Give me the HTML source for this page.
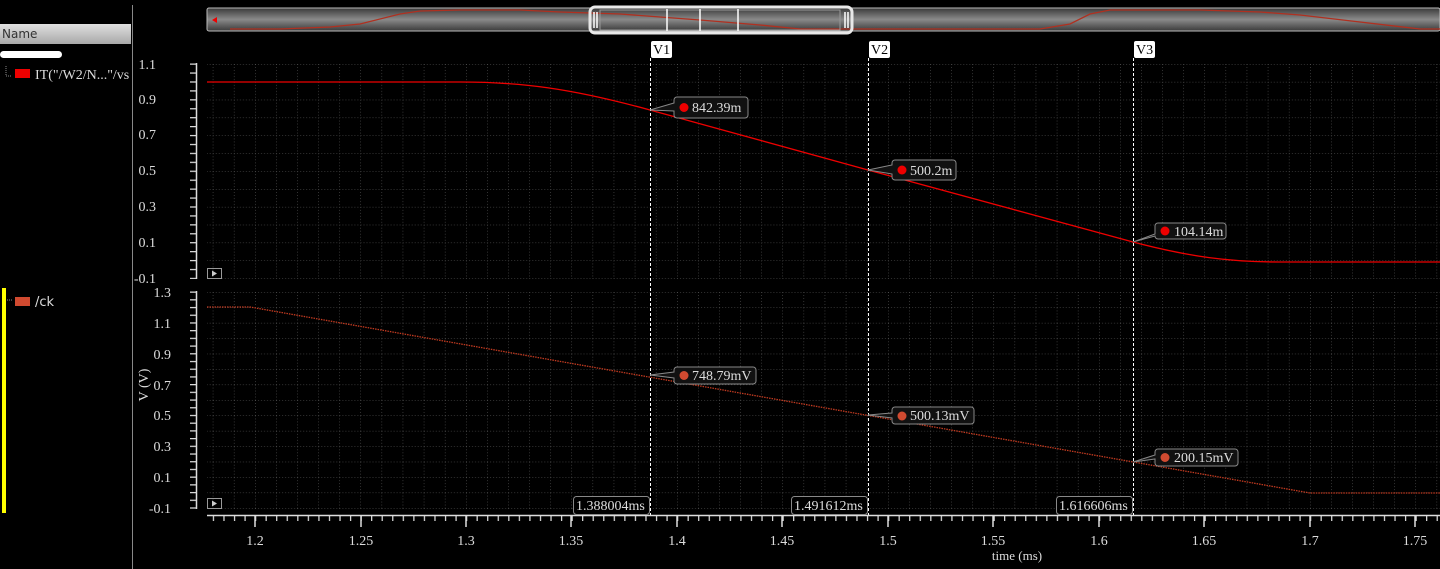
<!DOCTYPE html>
<html><head><meta charset="utf-8"><style>
html,body{margin:0;padding:0;background:#000;width:1440px;height:569px;overflow:hidden}
svg{display:block}
text{font-family:"Liberation Serif",serif;fill:#ddd}
.s{font-family:"DejaVu Sans","Liberation Sans",sans-serif}
</style></head><body>
<svg width="1440" height="569" viewBox="0 0 1440 569" xmlns="http://www.w3.org/2000/svg">
<defs>
<linearGradient id="hdr" x1="0" y1="0" x2="0" y2="1"><stop offset="0" stop-color="#e0e0e0"/><stop offset="1" stop-color="#a8a8a8"/></linearGradient>
<linearGradient id="sb" x1="0" y1="0" x2="0" y2="1"><stop offset="0" stop-color="#3a3a3a"/><stop offset="0.5" stop-color="#8a8a8a"/><stop offset="1" stop-color="#3a3a3a"/></linearGradient>
<pattern id="gT" patternUnits="userSpaceOnUse" x="255" y="64" width="21.1" height="17.86">
<line x1="0" y1="0" x2="21.1" y2="0" stroke="#666" stroke-width="1" stroke-dasharray="1,2"/>
<line x1="0" y1="0" x2="0" y2="17.86" stroke="#666" stroke-width="1" stroke-dasharray="1,2"/>
</pattern>
<pattern id="gB" patternUnits="userSpaceOnUse" x="255" y="292" width="21.1" height="15.43">
<line x1="0" y1="0" x2="21.1" y2="0" stroke="#666" stroke-width="1" stroke-dasharray="1,2"/>
<line x1="0" y1="0" x2="0" y2="15.43" stroke="#666" stroke-width="1" stroke-dasharray="1,2"/>
</pattern>
<pattern id="xt" patternUnits="userSpaceOnUse" x="255" y="515" width="10.55" height="10">
<line x1="0.5" y1="0" x2="0.5" y2="6" stroke="#ddd" stroke-width="1.5"/>
</pattern>
<pattern id="ytT" patternUnits="userSpaceOnUse" x="190" y="63.5" width="10" height="8.93">
<line x1="0" y1="0.5" x2="6" y2="0.5" stroke="#ddd" stroke-width="1.5"/>
</pattern>
<pattern id="ytB" patternUnits="userSpaceOnUse" x="190" y="291.5" width="10" height="7.71">
<line x1="0" y1="0.5" x2="6" y2="0.5" stroke="#ddd" stroke-width="1.5"/>
</pattern>
</defs>

<rect x="0" y="24" width="131" height="20" fill="url(#hdr)"/>
<text x="2" y="38" class="s" font-size="12" style="fill:#333">Name</text>
<rect x="0" y="51" width="62" height="7" rx="3.5" fill="#fff"/>
<path d="M6,66 V76 H12" stroke="#888" fill="none" stroke-dasharray="1,1"/>
<rect x="15" y="69" width="15" height="9" fill="#e00"/>
<text x="35" y="79" font-size="14">IT("/W2/N..."/vs</text>
<rect x="2" y="288" width="4" height="225" fill="#ff0"/>
<path d="M7,300 H12" stroke="#888" stroke-dasharray="1,1"/>
<rect x="15" y="297" width="15" height="9" fill="#d04a30"/>
<text x="35" y="306" class="s" font-size="13">/ck</text>
<line x1="132.5" y1="5" x2="132.5" y2="569" stroke="#888"/>

<rect x="207" y="8" width="1233" height="23" fill="url(#sb)" stroke="#bbb" stroke-width="1" rx="2"/>
<path d="M212,20 l5,-3 v6z" fill="#e00"/>
<path d="M230,29 L280,29 L330,27 L360,24 L400,14 L420,11 L460,10 L520,10 L560,12 L620,14 L700,20 L760,25 L800,29 L1040,29 L1070,24 L1090,14 L1110,10 L1200,10 L1260,12 L1300,15 L1360,22 L1420,29 L1440,29" stroke="#b03020" fill="none" stroke-width="1.3"/>
<rect x="590" y="7" width="262" height="26" rx="5" fill="none" stroke="#e8e8e8" stroke-width="3"/>
<rect x="600" y="10" width="240" height="20" fill="none" stroke="#999"/>
<line x1="594" y1="12" x2="594" y2="28" stroke="#fff" stroke-width="1.5"/><line x1="597" y1="12" x2="597" y2="28" stroke="#fff" stroke-width="1.5"/>
<line x1="845" y1="12" x2="845" y2="28" stroke="#fff" stroke-width="1.5"/><line x1="848" y1="12" x2="848" y2="28" stroke="#fff" stroke-width="1.5"/>
<line x1="667" y1="9" x2="667" y2="31" stroke="#fff" stroke-width="1.5"/>
<line x1="700" y1="9" x2="700" y2="31" stroke="#fff" stroke-width="1.5"/>
<line x1="738" y1="9" x2="738" y2="31" stroke="#fff" stroke-width="1.5"/>

<rect x="207" y="64" width="1233" height="215" fill="url(#gT)"/>
<rect x="207" y="292" width="1233" height="217" fill="url(#gB)"/>

<rect x="190" y="63" width="7" height="216" fill="url(#ytT)"/>
<rect x="190" y="291" width="7" height="218" fill="url(#ytB)"/>
<line x1="196.5" y1="63" x2="196.5" y2="279" stroke="#ddd" stroke-width="1.5"/>
<line x1="196.5" y1="291" x2="196.5" y2="509" stroke="#ddd" stroke-width="1.5"/>
<g font-size="14" text-anchor="end">
<text x="156" y="69">1.1</text><text x="156" y="104">0.9</text><text x="156" y="139">0.7</text><text x="156" y="175">0.5</text><text x="156" y="211">0.3</text><text x="156" y="247">0.1</text><text x="156" y="283">-0.1</text>
<text x="171" y="297">1.3</text><text x="171" y="328">1.1</text><text x="171" y="359">0.9</text><text x="171" y="390">0.7</text><text x="171" y="420">0.5</text><text x="171" y="451">0.3</text><text x="171" y="482">0.1</text><text x="171" y="513">-0.1</text>
</g>
<text x="148" y="385" font-size="14" transform="rotate(-90 148 385)" text-anchor="middle">V (V)</text>

<rect x="207.5" y="268.5" width="14" height="10" fill="none" stroke="#999"/><path d="M212,270.5 l5,3 l-5,3z" fill="#ccc"/>
<rect x="207.5" y="498.5" width="14" height="10" fill="none" stroke="#999"/><path d="M212,500.5 l5,3 l-5,3z" fill="#ccc"/>

<line x1="207" y1="515.5" x2="1440" y2="515.5" stroke="#ddd" stroke-width="1.5"/>
<rect x="207" y="515" width="1233" height="8" fill="url(#xt)"/>
<g stroke="#ddd" stroke-width="1.5">
<line x1="255" y1="515" x2="255" y2="527"/><line x1="361" y1="515" x2="361" y2="527"/><line x1="466" y1="515" x2="466" y2="527"/><line x1="571" y1="515" x2="571" y2="527"/><line x1="677" y1="515" x2="677" y2="527"/><line x1="782" y1="515" x2="782" y2="527"/><line x1="888" y1="515" x2="888" y2="527"/><line x1="993" y1="515" x2="993" y2="527"/><line x1="1099" y1="515" x2="1099" y2="527"/><line x1="1204" y1="515" x2="1204" y2="527"/><line x1="1310" y1="515" x2="1310" y2="527"/><line x1="1415" y1="515" x2="1415" y2="527"/>
</g>
<g font-size="14" text-anchor="middle">
<text x="255" y="545">1.2</text><text x="361" y="545">1.25</text><text x="466" y="545">1.3</text><text x="571" y="545">1.35</text><text x="677" y="545">1.4</text><text x="782" y="545">1.45</text><text x="888" y="545">1.5</text><text x="993" y="545">1.55</text><text x="1099" y="545">1.6</text><text x="1204" y="545">1.65</text><text x="1310" y="545">1.7</text><text x="1415" y="545">1.75</text>
<text x="1017" y="560" font-size="13">time (ms)</text>
</g>

<path d="M207,82 L460,82 C520,82 570,88 650,110 L868,170 L1133,242 C1190,257 1230,262 1280,262 L1440,262" stroke="#e00" fill="none" stroke-width="1.3"/>
<path d="M207,307 L250,307 L1310,493 L1440,493" stroke="#c03a20" fill="none" stroke-width="1.3" stroke-dasharray="1.5,1"/>

<g stroke="#fff" stroke-width="1" stroke-dasharray="3,2">
<line x1="650.5" y1="58" x2="650.5" y2="515"/><line x1="868.5" y1="58" x2="868.5" y2="515"/><line x1="1133.5" y1="58" x2="1133.5" y2="515"/>
</g>
<g font-size="14">
<rect x="651" y="41" width="21" height="17" rx="2" fill="#fff"/><text x="653" y="54" style="fill:#000">V1</text>
<rect x="869" y="41" width="21" height="17" rx="2" fill="#fff"/><text x="871" y="54" style="fill:#000">V2</text>
<rect x="1134" y="41" width="21" height="17" rx="2" fill="#fff"/><text x="1136" y="54" style="fill:#000">V3</text>
</g>

<g font-size="14" stroke-width="1">
<path d="M650,110 L674,103 V100 a3,3 0 0 1 3,-3 H745 a3,3 0 0 1 3,3 V115 a3,3 0 0 1 -3,3 H677 a3,3 0 0 1 -3,-3 V111 Z" fill="#111" stroke="#888"/>
<circle cx="684" cy="107.5" r="4.5" fill="#e00"/><text x="692" y="112">842.39m</text>
<path d="M868,170 L892,165 V163 a3,3 0 0 1 3,-3 H953 a3,3 0 0 1 3,3 V177 a3,3 0 0 1 -3,3 H895 a3,3 0 0 1 -3,-3 V174 Z" fill="#111" stroke="#888"/>
<circle cx="902" cy="170" r="4.5" fill="#e00"/><text x="910" y="175">500.2m</text>
<path d="M1133,242 L1155,234 V226 a3,3 0 0 1 3,-3 H1223 a3,3 0 0 1 3,3 V236 a3,3 0 0 1 -3,3 H1158 a3,3 0 0 1 -3,-3 Z" fill="#111" stroke="#888"/>
<circle cx="1165" cy="231" r="4.5" fill="#e00"/><text x="1174" y="236">104.14m</text>

<path d="M650,375 L674,372 V370 a3,3 0 0 1 3,-3 H753 a3,3 0 0 1 3,3 V381 a3,3 0 0 1 -3,3 H677 a3,3 0 0 1 -3,-3 V378 Z" fill="#111" stroke="#888"/>
<circle cx="684" cy="375.5" r="4.5" fill="#d04a30"/><text x="692" y="380">748.79mV</text>
<path d="M868,415 L892,413 V410 a3,3 0 0 1 3,-3 H971 a3,3 0 0 1 3,3 V421 a3,3 0 0 1 -3,3 H895 a3,3 0 0 1 -3,-3 V418 Z" fill="#111" stroke="#888"/>
<circle cx="902" cy="416" r="4.5" fill="#d04a30"/><text x="910" y="420">500.13mV</text>
<path d="M1133,462 L1155,455 V452 a3,3 0 0 1 3,-3 H1235 a3,3 0 0 1 3,3 V463 a3,3 0 0 1 -3,3 H1158 a3,3 0 0 1 -3,-3 V459 Z" fill="#111" stroke="#888"/>
<circle cx="1165" cy="457.5" r="4.5" fill="#d04a30"/><text x="1174" y="462">200.15mV</text>
</g>

<g font-size="14">
<rect x="573.5" y="496.5" width="76" height="18" rx="3" fill="#000" stroke="#888"/><text x="576" y="510">1.388004ms</text>
<rect x="791.5" y="496.5" width="76" height="18" rx="3" fill="#000" stroke="#888"/><text x="794" y="510">1.491612ms</text>
<rect x="1056.5" y="496.5" width="76" height="18" rx="3" fill="#000" stroke="#888"/><text x="1059" y="510">1.616606ms</text>
</g>
</svg>
</body></html>
